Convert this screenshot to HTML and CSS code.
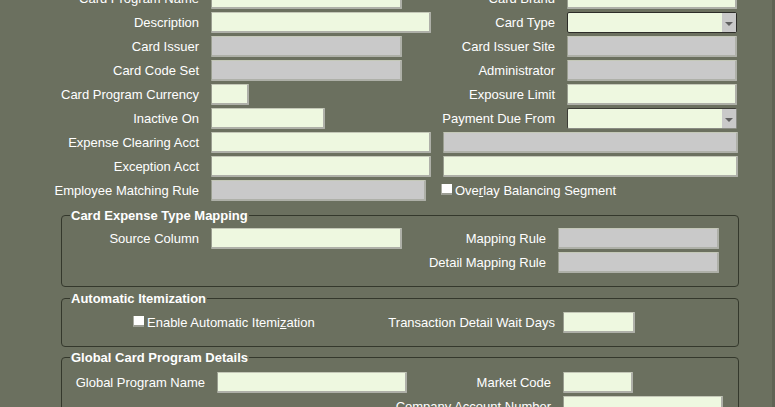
FILE: index.html
```html
<!DOCTYPE html>
<html>
<head>
<meta charset="utf-8">
<link rel="stylesheet" href="styles.css">
</head>
<body>
<div class="canvas">
  <div class="form">
    <div class="row">
      <div class="left"><span class="lbl">Card Program Name</span><span class="f w191"></span></div>
      <div class="right"><span class="rlbl">Card Brand</span><span class="f w170"></span></div>
    </div>
    <div class="row">
      <div class="left"><span class="lbl">Description</span><span class="f w220"></span></div>
      <div class="right"><span class="rlbl">Card Type</span><span class="f w170 sel focus"><span class="btn"><span class="tri"></span></span></span></div>
    </div>
    <div class="row">
      <div class="left"><span class="lbl">Card Issuer</span><span class="f dis w191"></span></div>
      <div class="right"><span class="rlbl">Card Issuer Site</span><span class="f dis w170"></span></div>
    </div>
    <div class="row">
      <div class="left"><span class="lbl">Card Code Set</span><span class="f dis w191"></span></div>
      <div class="right"><span class="rlbl">Administrator</span><span class="f dis w170"></span></div>
    </div>
    <div class="row">
      <div class="left"><span class="lbl">Card Program Currency</span><span class="f w38"></span></div>
      <div class="right"><span class="rlbl">Exposure Limit</span><span class="f w170"></span></div>
    </div>
    <div class="row">
      <div class="left"><span class="lbl">Inactive On</span><span class="f w114"></span></div>
      <div class="right"><span class="rlbl">Payment Due From</span><span class="f w170 sel"><span class="btn"><span class="tri"></span></span></span></div>
    </div>
    <div class="row">
      <div class="left"><span class="lbl">Expense Clearing Acct</span><span class="f w220"></span></div>
      <div class="right"><span class="f dis w295"></span></div>
    </div>
    <div class="row">
      <div class="left"><span class="lbl">Exception Acct</span><span class="f w220"></span></div>
      <div class="right"><span class="f w295"></span></div>
    </div>
    <div class="row">
      <div class="left"><span class="lbl">Employee Matching Rule</span><span class="f dis w215"></span></div>
      <div class="right cbrow"><span class="cb"></span><span class="cbtext">Ove<u>r</u>lay Balancing Segment</span></div>
    </div>

    <fieldset class="grp g1">
      <legend>Card Expense Type Mapping</legend>
      <div class="grow">
        <div class="gleft"><span class="glbl">Source Column</span><span class="f w191"></span></div>
        <div class="gright"><span class="grlbl">Mapping Rule</span><span class="f dis w161"></span></div>
      </div>
      <div class="grow">
        <div class="gleft"></div>
        <div class="gright"><span class="grlbl">Detail Mapping Rule</span><span class="f dis w161"></span></div>
      </div>
    </fieldset>

    <fieldset class="grp g2">
      <legend>Automatic Itemization</legend>
      <div class="grow">
        <div class="cbgroup"><span class="cb"></span><span class="cbtext">Enable Automatic Itemi<u>z</u>ation</span></div>
        <span class="tdlbl">Transaction Detail Wait Days</span><span class="f w72"></span>
      </div>
    </fieldset>

    <fieldset class="grp g3">
      <legend>Global Card Program Details</legend>
      <div class="grow">
        <div class="g3left"><span class="g3lbl">Global Program Name</span><span class="f w190"></span></div>
        <div class="g3right"><span class="g3rlbl">Market Code</span><span class="f w70"></span></div>
      </div>
      <div class="grow">
        <div class="g3left"></div>
        <div class="g3right"><span class="g3rlbl">Company Account Number</span><span class="f w160"></span></div>
      </div>
    </fieldset>
  </div>
</div>
</body>
</html>
```
FILE: styles.css
```css
html, body {
  margin: 0;
  padding: 0;
  height: 100%;
  overflow: hidden;
  background: #6b705f;
}
body {
  font-family: "Liberation Sans", Arial, sans-serif;
  font-size: 13px;
  color: #ffffff;
}
.canvas {
  width: 772px;
  height: 100%;
  border-right: 3px solid #5f6354;
  overflow: hidden;
}
.form {
  margin-top: -12px;
}
.row {
  display: flex;
  height: 24px;
}
.left {
  width: 431px;
  display: flex;
}
.lbl, .rlbl, .glbl, .grlbl, .tdlbl, .g3lbl, .g3rlbl {
  display: flex;
  justify-content: flex-end;
  flex-shrink: 0;
  line-height: 21px;
  white-space: nowrap;
  margin-right: 12px;
}
.lbl { width: 199px; }
.right {
  margin-left: 12px;
  display: flex;
}
.right.cbrow {
  margin-left: 10px;
  align-items: flex-start;
}
.rlbl { width: 112px; }
.f {
  display: block;
  flex-shrink: 0;
  height: 21px;
  box-sizing: border-box;
  background: #eef8e0;
  border-top: 1px solid #c4c8b8;
  border-left: 1px solid #9a9e90;
  border-right: 2px solid #aeb0a8;
  border-bottom: 2px solid #aeb0a8;
  border-radius: 1px;
}
.f.dis {
  background: #c9c9c9;
}
.f.sel {
  display: flex;
  justify-content: flex-end;
  border-top: 1px solid #3c3c36;
  border-left: 1px solid #3c3c36;
  border-right: 1px solid #8a8c84;
  border-bottom: 1px solid #8a8c84;
  border-radius: 2px;
}
.f.sel.focus {
  border: 1px solid #2c2c28;
}
.btn {
  width: 14px;
  height: 100%;
  background: #c9c9c9;
  display: flex;
  align-items: center;
  justify-content: center;
}
.tri {
  width: 0;
  height: 0;
  border-left: 4px solid transparent;
  border-right: 4px solid transparent;
  border-top: 4px solid #606060;
  margin-top: 2px;
}
.w38 { width: 38px; }
.w70 { width: 70px; }
.w72 { width: 72px; }
.w114 { width: 114px; }
.w160 { width: 160px; }
.w161 { width: 161px; }
.w170 { width: 170px; }
.w190 { width: 190px; }
.w191 { width: 191px; }
.w215 { width: 215px; }
.w220 { width: 220px; }
.w295 { width: 295px; }

.cb {
  display: block;
  flex-shrink: 0;
  width: 11px;
  height: 11px;
  box-sizing: border-box;
  background: #ffffff;
  border-left: 1px solid #a8aaa0;
  border-bottom: 2px solid #9c9e94;
  margin-top: 4px;
  margin-right: 3px;
}
.cbtext {
  line-height: 21px;
  white-space: nowrap;
}

.grp {
  margin: 0 0 0 61px;
  width: 678px;
  box-sizing: border-box;
  border: 1px solid #34382c;
  border-radius: 4px;
  padding: 0;
  min-width: 0;
}
.grp legend {
  font-weight: bold;
  line-height: 15px;
  padding: 0 1px;
  margin-left: 8px;
  white-space: nowrap;
}
.g1 {
  margin-top: 4px;
  padding: 5px 0 10px 0;
}
.g2 {
  margin-top: 4px;
  padding: 6px 0 13px 0;
}
.g3 {
  margin-top: 3px;
  padding: 7px 0 20px 0;
}
.grow {
  display: flex;
  height: 24px;
}
.g2 .grow {
  height: 21px;
}
.gleft {
  width: 340px;
  flex-shrink: 0;
  display: flex;
}
.glbl { width: 137px; }
.gright {
  display: flex;
}
.grlbl { width: 144px; }
.cbgroup {
  display: flex;
  flex-shrink: 0;
  margin-left: 71px;
  width: 247px;
}
.tdlbl {
  width: 175px;
  margin-right: 8px;
}
.g3left {
  width: 344px;
  flex-shrink: 0;
  display: flex;
}
.g3lbl { width: 143px; }
.g3right {
  display: flex;
}
.g3rlbl { width: 145px; }
```
